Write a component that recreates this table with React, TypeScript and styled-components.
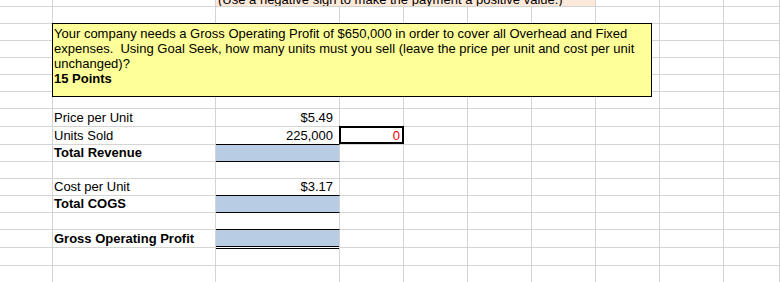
import React from "react";
import styled, { createGlobalStyle, css } from "styled-components";

const GlobalStyle = createGlobalStyle`
  html, body {
    margin: 0;
    padding: 0;
    background: #ffffff;
  }
  body {
    font-family: "Liberation Sans", Arial, sans-serif;
    font-size: 13px;
    color: #000000;
    overflow: hidden;
  }
`;

const GRID = "#d4d4d4";
const BLUE = "#b8cce4";
const PEACH = "#fde9d9";
const NOTE_YELLOW = "#ffff99";

const ROW_HEIGHTS = [7, 17, 17, 17, 17, 17, 17, 18, 18, 17, 17, 17, 17, 17, 18, 18, 17];
const COLUMN_COUNT = 10;

type Rule = "grid" | "black" | "doubleBottom" | "doubleTop";

const Sheet = styled.div`
  position: relative;
  width: 780px;
  height: 282px;
  overflow: hidden;
  display: grid;
  grid-template-columns: 53px 163px 124px repeat(6, 64px) 1fr;
  grid-template-rows: ${ROW_HEIGHTS.map((h) => `${h}px`).join(" ")};
`;

const Cell = styled.div<{
  $align?: "left" | "right";
  $bold?: boolean;
  $color?: string;
  $fill?: string;
  $rule?: Rule;
  $span?: number;
  $padRight?: number;
}>`
  position: relative;
  box-sizing: border-box;
  min-width: 0;
  display: flex;
  align-items: flex-end;
  justify-content: ${(p) => (p.$align === "right" ? "flex-end" : "flex-start")};
  padding: 0 ${(p) => (p.$align === "right" ? `${p.$padRight ?? 6}px` : "0")} 1px
    ${(p) => (p.$align === "right" ? "0" : "1px")};
  grid-column: span ${(p) => p.$span ?? 1};
  border-right: 1px solid ${GRID};
  border-bottom: 1px solid ${GRID};
  background: ${(p) => p.$fill ?? "transparent"};
  color: ${(p) => p.$color ?? "#000000"};
  font-weight: ${(p) => (p.$bold ? 700 : 400)};
  line-height: 15px;
  white-space: nowrap;

  ${(p) =>
    p.$rule === "black" &&
    css`
      border-bottom-color: #000000;
    `}
  ${(p) =>
    p.$rule === "doubleBottom" &&
    css`
      border-bottom-color: #ffffff;
      box-shadow: inset 0 -1px 0 #000000;
    `}
  ${(p) =>
    p.$rule === "doubleTop" &&
    css`
      box-shadow: inset 0 1px 0 #000000;
    `}
`;

const BannerCell = styled(Cell)`
  overflow: hidden;
  padding: 0 0 0 2px;
`;

const BannerText = styled.span`
  margin-bottom: -1px;
`;

const BoxedCell = styled(Cell)`
  &::after {
    content: "";
    position: absolute;
    left: -1px;
    top: -1px;
    right: -1px;
    bottom: 0;
    border: 2px solid #000000;
    pointer-events: none;
  }
`;

const Note = styled.div`
  position: absolute;
  left: 52px;
  top: 23px;
  width: 600px;
  height: 74px;
  box-sizing: border-box;
  border: 1px solid #000000;
  background: ${NOTE_YELLOW};
  padding: 2px 0 0 1px;
  font-size: 13px;
  line-height: 15px;
  white-space: pre;
  z-index: 2;
`;

const NoteLine = styled.div<{ $bold?: boolean }>`
  font-weight: ${(p) => (p.$bold ? 700 : 400)};
`;

type CellSpec = {
  col: number;
  span?: number;
  text?: string;
  align?: "left" | "right";
  bold?: boolean;
  color?: string;
  fill?: string;
  rule?: Rule;
  boxed?: boolean;
  banner?: boolean;
  padRight?: number;
};

const SHEET: Record<number, CellSpec[]> = {
  0: [
    {
      col: 2,
      span: 5,
      text: "(Use a negative sign to make the payment a positive value.)",
      fill: PEACH,
      banner: true,
    },
  ],
  7: [
    { col: 1, text: "Price per Unit" },
    { col: 2, text: "$5.49", align: "right" },
  ],
  8: [
    { col: 1, text: "Units Sold" },
    { col: 2, text: "225,000", align: "right", rule: "black" },
    { col: 3, text: "0", align: "right", color: "#ff0000", boxed: true, padRight: 3 },
  ],
  9: [
    { col: 1, text: "Total Revenue", bold: true },
    { col: 2, fill: BLUE, rule: "black" },
  ],
  11: [
    { col: 1, text: "Cost per Unit" },
    { col: 2, text: "$3.17", align: "right", rule: "black" },
  ],
  12: [
    { col: 1, text: "Total COGS", bold: true },
    { col: 2, fill: BLUE, rule: "black" },
  ],
  13: [{ col: 2, rule: "black" }],
  14: [
    { col: 1, text: "Gross Operating Profit", bold: true },
    { col: 2, fill: BLUE, rule: "doubleBottom" },
  ],
  15: [{ col: 2, rule: "doubleTop" }],
};

const NOTE_LINES = [
  "Your company needs a Gross Operating Profit of $650,000 in order to cover all Overhead and Fixed",
  "expenses.  Using Goal Seek, how many units must you sell (leave the price per unit and cost per unit",
  "unchanged)?",
];

function renderRow(rowIndex: number) {
  const specs = SHEET[rowIndex] ?? [];
  const out: React.ReactNode[] = [];
  let col = 0;
  while (col < COLUMN_COUNT) {
    const spec = specs.find((s) => s.col === col);
    const key = `${rowIndex}-${col}`;
    if (!spec) {
      out.push(<Cell key={key} />);
      col += 1;
      continue;
    }
    const common = {
      $align: spec.align,
      $bold: spec.bold,
      $color: spec.color,
      $fill: spec.fill,
      $rule: spec.rule,
      $span: spec.span,
      $padRight: spec.padRight,
    };
    if (spec.banner) {
      out.push(
        <BannerCell key={key} {...common}>
          <BannerText>{spec.text}</BannerText>
        </BannerCell>
      );
    } else if (spec.boxed) {
      out.push(
        <BoxedCell key={key} {...common}>
          {spec.text}
        </BoxedCell>
      );
    } else {
      out.push(
        <Cell key={key} {...common}>
          {spec.text}
        </Cell>
      );
    }
    col += spec.span ?? 1;
  }
  return out;
}

export default function App() {
  return (
    <>
      <GlobalStyle />
      <Sheet>
        {ROW_HEIGHTS.map((_, r) => renderRow(r))}
        <Note>
          {NOTE_LINES.map((line) => (
            <NoteLine key={line}>{line}</NoteLine>
          ))}
          <NoteLine $bold>15 Points</NoteLine>
        </Note>
      </Sheet>
    </>
  );
}
